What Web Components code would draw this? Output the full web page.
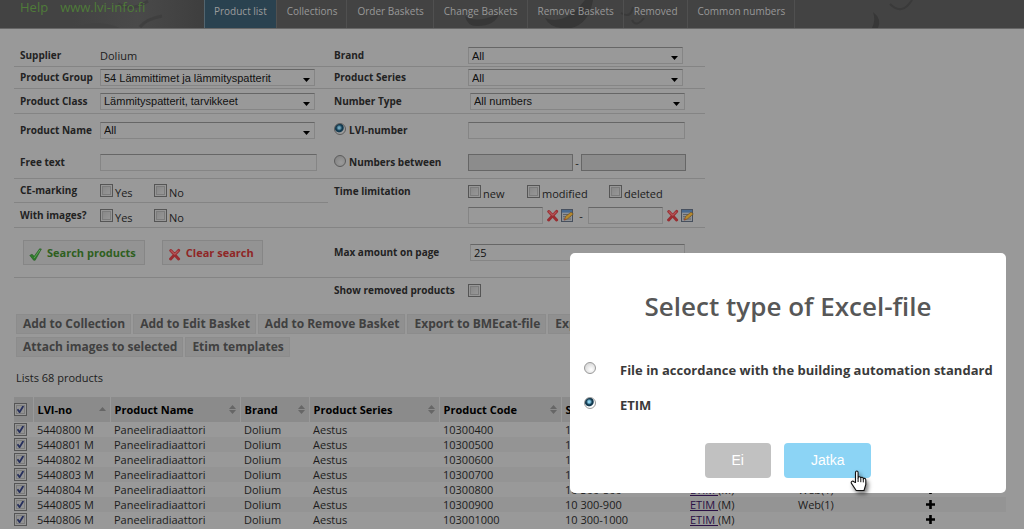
<!DOCTYPE html>
<html lang="en">
<head>
<meta charset="utf-8">
<title>Product list</title>
<style>
  html, body { margin: 0; min-height: 100%; background: #999; }
  body { font: 11px/15px "Open Sans", "Noto Sans", sans-serif; color: #1c1c1c; overflow: hidden; }
</style>
</head>
<body>
<product-page></product-page>

<script>
const define = (name, html) => customElements.define(name, class extends HTMLElement {
  constructor() {
    super();
    this.attachShadow({ mode: "open" }).innerHTML = html;
  }
});

/* Tick boxes and radios shared by the form, the table and the dialog */
const tickStyles = `
  input[type=checkbox], input[type=radio] { appearance: none; box-sizing: border-box; margin: 0; flex: none; }
  input[type=checkbox] {
    width: 13px; height: 13px; border: 1px solid #555;
    background: linear-gradient(135deg, #848484, #9a9a9a); box-shadow: inset 0 0 0 1px #969696, inset 0 0 0 2px #7c7c7c;
  }
  input[type=checkbox]:checked {
    background: url("data:image/svg+xml,%3Csvg xmlns='http://www.w3.org/2000/svg' viewBox='0 0 11 11'%3E%3Cpath d='M2.5 5.2 4.6 8.2 8.3 2' fill='none' stroke='%23262f5c' stroke-width='1.8'/%3E%3C/svg%3E") center / 11px no-repeat, #929292;
  }
  input[type=radio] {
    width: 12px; height: 12px; border: 1px solid var(--ring, #5c5c5c); border-radius: 50%;
    background: radial-gradient(circle at 60% 65%, var(--face, #9b9b9b), var(--shade, #7f7f7f));
  }
  input[type=radio]:checked {
    background: radial-gradient(circle at 42% 38%, var(--spark, #6da3ba) 0 1px, #12394f 3px 4px, var(--face, #9b9b9b) 5px);
  }`;

const cross = `<svg width="13" height="13" viewBox="0 0 13 13" aria-hidden="true"><path d="M2.8 2.6 10.6 11M10.6 2.4 2.6 11" stroke="#992d31" stroke-width="3" stroke-linecap="round"/><path d="M3 2.7 6.4 6M10.2 2.9 7 6" stroke="#b35558" stroke-width="1.2" stroke-linecap="round"/></svg>`;
const tick = `<svg width="13" height="13" viewBox="0 0 13 13" aria-hidden="true"><path d="M.8 7.4 3 6.2 5.2 8.3 10.6.8 12.4 1 6.2 12.2H4.6Z" fill="#2f7a2c" stroke="#245c22" stroke-width=".6"/><path d="M5.2 10 11 1.8" stroke="#5da058" stroke-width="1"/></svg>`;
const calendar = `<svg width="13" height="13" viewBox="0 0 13 13" aria-hidden="true"><rect x=".5" y=".5" width="11" height="12" fill="#8f9296" stroke="#47505e"/><path d="M1 1h10v2.6H1z" fill="#48698f"/><path d="M2 5.5h8M2 7.7h8M2 10h8" stroke="#5f6268"/><path d="m3.5 11 1-3.5L10 3.2l2.3 1.7L6.6 9.8Z" fill="#b78a2e" stroke="#6d4e1b" stroke-width=".6"/><path d="m3.2 11.4.5-2 1.4 1.3Z" fill="#b03a2c"/></svg>`;

define("site-header", `
<style>
  :host { display: flex; position: relative; height: 29px; background: #434343; border-bottom: 1px solid #666; box-sizing: border-box; overflow: hidden; }
  .drops { position: absolute; inset: 0; width: 100%; height: 100%; }
  .links { display: flex; flex: 0 0 184px; gap: 12px; padding-left: 20px; font-size: 13px; line-height: 14px; }
  .links a { color: #4f7b39; }
  a { position: relative; text-decoration: none; color: #989898; }
  nav { display: flex; position: relative; font-size: 10px; }
  nav a { padding: 0 9px 0 10px; line-height: 23px; border-right: 1px solid #505050; white-space: nowrap; }
  nav a[aria-current] { background: #2a4250; border-left: 1px solid #53656f; padding-left: 9px; color: #9c9c9c; }
</style>
<svg class="drops" viewBox="0 0 1024 28" preserveAspectRatio="xMinYMin slice" aria-hidden="true">
  <defs><linearGradient id="g" x1="0" x2="1"><stop offset="0" stop-color="#434343"/><stop offset=".5" stop-color="#4c4c4c"/><stop offset="1" stop-color="#3c3c3c"/></linearGradient></defs>
  <path d="M72 0h132v28H120Q98 18 72 28Z" fill="url(#g)" opacity=".7"/>
  <path d="M118 4q14 8 30-3M140 27q6-8 22-11" stroke="#3a3a3a" stroke-width="3" fill="none" opacity=".6"/>
  <path d="M465 16q10 8 34-2-4 12-22 12-10 0-12-10ZM545 18q20 8 40-18h8q-4 24-22 28-20 2-26-10Z" fill="#373737"/>
  <path d="M621 13q10 6 12-6M632 20q4 8 12-2M890 4q12 12 22-4" fill="none" stroke="#3a3a3a" stroke-width="2"/>
  <path d="M873 12q9 7 5 16h-6q4-8 1-16Z" fill="#373737"/>
</svg>
<div class="links"><a href="#help">Help</a><a href="#info">www.lvi-info.fi</a></div>
<nav>
  <a href="#list" aria-current="page">Product list</a><a href="#collections">Collections</a><a href="#order">Order Baskets</a><a href="#change">Change Baskets</a><a href="#remove">Remove Baskets</a><a href="#removed">Removed</a><a href="#common">Common numbers</a>
</nav>`);

/* One ruled band of the search form: left half, right half */
define("form-band", `
<style>
  :host { display: grid; grid-template-columns: 314px 1fr; border-bottom: 1px solid #848484; }
  :host([plain]) { border-bottom: 0; }
</style><slot></slot>`);

/* A caption with the controls that belong to it */
define("form-field", `
<style>
  :host { display: flex; align-items: center; box-sizing: border-box; padding-left: 6px; }
  .caption { flex: 0 0 80px; display: flex; font-size: 10px; font-weight: 700; color: #222; white-space: nowrap; }
  :host([wide]) .caption { flex-basis: 134px; }
  .controls { display: flex; align-items: center; }
</style>
<div class="caption"><slot name="caption"></slot></div><div class="controls"><slot></slot></div>`);

const select = (id, text) => `<select id="${id}"><option>${text}</option></select>`;
const check = (id, text) => `<span class="check"><input type="checkbox" id="${id}"><label for="${id}">${text}</label></span>`;

define("search-form", `
<style>
  ${tickStyles}
  :host { display: block; max-width: 691px; padding: 16px 0 0 14px; }
  select, input[type=text] {
    appearance: none; box-sizing: border-box; height: 17px; width: 215px; margin: 0; padding: 0 3px;
    border: 1px solid #858585; border-top-color: #666; border-radius: 0; background: #999; color: #111;
    font: 11px/13px "Liberation Sans", Arial, sans-serif;
  }
  select { display: block; padding-top: 1px; background: url("data:image/svg+xml,%3Csvg xmlns='http://www.w3.org/2000/svg' width='7' height='4'%3E%3Cpath d='M0 0h7L3.5 4Z'/%3E%3C/svg%3E") right 4px top 8px no-repeat; }
  input[type=text] { width: 217px; font-family: "Open Sans", sans-serif; }
  input:disabled { background: #8c8c8c; border-color: #666; }
  input.half { width: 105px; }
  input.date { width: 75px; }
  input#max { width: 215px; }
  .dash { width: 8px; text-align: center; }
  .inset { margin-left: 2px; }
  .stack { display: grid; }
  .check { display: flex; align-items: center; gap: 2px; }
  .check label { padding-top: 4px; line-height: 13px; }
  .yesno { display: grid; grid-template-columns: 54px 54px; }
  .times { display: grid; grid-template-columns: 59px 82px 80px; }
  .radio { display: flex; gap: 3px; }
  .dates { display: flex; align-items: center; gap: 3px; }
  .dates button { display: block; margin: 0; padding: 0; border: 0; background: none; height: 13px; width: 13px; }
  .dates button + button { margin-left: -1px; }
  .buttons { display: flex; align-items: center; gap: 17px; padding-left: 9px; }
  .buttons button {
    display: flex; align-items: center; gap: 5px; height: 25px; padding: 0 8px 0 5px; white-space: nowrap;
    border: 1px solid #868686; background: #939393; font: 700 11px/15px "Open Sans", sans-serif;
  }
  .buttons svg { margin-top: 3px; }
  .go { color: #2e5f1e; } .clear { color: #8f2626; }
  .h22 { height: 21px; } .h25 { height: 24px; } .h32 { height: 32px; } .h48 { height: 49px; }
  .rule { border-bottom: 1px solid #848484; }
</style>
<form>
  <form-band>
    <form-field class="h22"><span slot="caption">Supplier</span>Dolium</form-field>
    <form-field class="h22" wide><label slot="caption" for="brand">Brand</label>${select("brand", "All")}</form-field>
  </form-band>
  <form-band>
    <form-field class="h22"><label slot="caption" for="group">Product Group</label>${select("group", "54 Lämmittimet ja lämmityspatterit")}</form-field>
    <form-field class="h22" wide><label slot="caption" for="series">Product Series</label>${select("series", "All")}</form-field>
  </form-band>
  <form-band>
    <form-field class="h25"><label slot="caption" for="class">Product Class</label>${select("class", "Lämmityspatterit, tarvikkeet")}</form-field>
    <form-field class="h25" wide><label slot="caption" for="type">Number Type</label><span class="inset">${select("type", "All numbers")}</span></form-field>
  </form-band>
  <form-band>
    <div class="stack">
      <form-field class="h32"><label slot="caption" for="name">Product Name</label>${select("name", "All")}</form-field>
      <form-field class="h32"><label slot="caption" for="free">Free text</label><input type="text" id="free"></form-field>
    </div>
    <div class="stack">
      <form-field class="h32" wide><span slot="caption" class="radio"><input type="radio" name="by" id="lvi" checked><label for="lvi">LVI-number</label></span><input type="text" aria-label="LVI-number"></form-field>
      <form-field class="h32" wide><span slot="caption" class="radio"><input type="radio" name="by" id="between"><label for="between">Numbers between</label></span><input type="text" class="half" disabled aria-label="From number"><span class="dash">-</span><input type="text" class="half" disabled aria-label="To number"></form-field>
    </div>
  </form-band>
  <form-band>
    <div class="stack">
      <form-field class="h25 rule"><span slot="caption">CE-marking</span><div class="yesno">${check("ce-y", "Yes")}${check("ce-n", "No")}</div></form-field>
      <form-field class="h25"><span slot="caption">With images?</span><div class="yesno">${check("im-y", "Yes")}${check("im-n", "No")}</div></form-field>
    </div>
    <div class="stack">
      <form-field class="h25" wide><span slot="caption">Time limitation</span><div class="times">${check("t-new", "new")}${check("t-mod", "modified")}${check("t-del", "deleted")}</div></form-field>
      <form-field class="h25" wide><div class="dates"><input type="text" class="date" aria-label="From date"><button type="button" aria-label="Clear from date">${cross}</button><button type="button" aria-label="Pick from date">${calendar}</button><span class="dash">-</span><input type="text" class="date" aria-label="To date"><button type="button" aria-label="Clear to date">${cross}</button><button type="button" aria-label="Pick to date">${calendar}</button></div></form-field>
    </div>
  </form-band>
  <form-band>
    <div class="buttons"><button type="button" class="go">${tick}Search products</button><button type="button" class="clear">${cross}Clear search</button></div>
    <form-field class="h48" wide><label slot="caption" for="max">Max amount on page</label><span class="inset"><input type="text" id="max" value="25"></span></form-field>
  </form-band>
  <form-band plain>
    <span></span>
    <form-field class="h25" wide><label slot="caption" for="removed">Show removed products</label><input type="checkbox" id="removed"></form-field>
  </form-band>
</form>`);

define("action-bar", `
<style>
  :host { display: flex; flex-wrap: wrap; gap: 3px 2px; max-width: 680px; padding: 12px 16px 0; }
  button {
    margin: 0; height: 20px; padding: 0 5px 0 6px; border: 1px solid #8c8c8c; background: #909090; color: #404040;
    font: 700 12px/18px "Open Sans", sans-serif; white-space: nowrap;
  }
</style>
<button>Add to Collection</button><button>Add to Edit Basket</button><button>Add to Remove Basket</button><button>Export to BMEcat-file</button><button>Export to Excel</button><button>Attach images to selected</button><button>Etim templates</button>`);

const codes = [["5440800", "10300400", "10 300-400"], ["5440801", "10300500", "10 300-500"], ["5440802", "10300600", "10 300-600"], ["5440803", "10300700", "10 300-700"], ["5440804", "10300800", "10 300-800"], ["5440805", "10300900", "10 300-900"], ["5440806", "103001000", "10 300-1000"]];
const sortMark = up => `<svg width="7" height="9" viewBox="0 0 7 9" aria-hidden="true"><path d="M0 4 3.5 0 7 4Z${up ? "" : "M0 5h7L3.5 9Z"}" transform="translate(0 ${up ? 2 : 0})" fill="#666"/></svg>`;
const head = (text, up) => `<th scope="col"><div>${text}${sortMark(up)}</div></th>`;

define("product-table", `
<style>
  ${tickStyles}
  :host { display: block; padding: 0 18px 0 14px; }
  p { margin: 0; padding: 13px 2px 12px; }
  table { width: 100%; table-layout: fixed; border-collapse: collapse; }
  th { height: 25px; padding: 0 4px; background: #8b8b8b; border-right: 1px solid #999; text-align: left; font-size: 11px; line-height: 15px; font-weight: 700; color: #000; box-sizing: border-box; white-space: nowrap; }
  th div { display: flex; align-items: center; justify-content: space-between; }
  td { height: 15px; padding: 0 4px; line-height: 15px; white-space: nowrap; }
  tbody tr:nth-child(even) { background: #949494; }
  th:first-child, td:first-child { padding: 0; }
  input { display: block; }
  a { color: #2b1145; }
  td svg { display: block; }
</style>
<p>Lists 68 products</p>
<table>
  <colgroup><col width="19"><col width="77"><col width="130"><col width="69"><col width="130"><col width="122"><col width="125"><col width="108"><col width="128"><col></colgroup>
  <thead><tr><th><input type="checkbox" checked aria-label="Select all"></th>${head("LVI-no", true)}${head("Product Name")}${head("Brand")}${head("Product Series")}${head("Product Code")}${head("Supplier Code")}${head("ETIM")}${head("Images")}<th></th></tr></thead>
  <tbody>${codes.map(([no, code, supplier], i) => `<tr><td><input type="checkbox" checked aria-label="Select ${no}"></td><td>${no} M</td><td>Paneeliradiaattori</td><td>Dolium</td><td>Aestus</td><td>${code}</td><td>${supplier}</td><td><a href="#etim">ETIM </a>(M)</td><td>${i < 6 ? "Web(1)" : ""}</td><td><svg width="9" height="9" viewBox="0 0 9 9" aria-hidden="true"><path d="M4.5 0v9M0 4.5h9" stroke="#000" stroke-width="2.6"/></svg></td></tr>`).join("")}</tbody>
</table>`);

define("excel-dialog", `
<style>
  ${tickStyles}
  :host {
    display: block; position: absolute; top: 253px; right: 18px; width: 436px; height: 240px; box-sizing: border-box; padding: 34px 14px 0;
    border-radius: 5px; background: #fff; --ring: #999; --face: #fff; --shade: #ccc; --spark: #8fd4f0;
  }
  h2 { margin: 0; text-align: center; font-size: 26px; line-height: 38px; font-weight: 600; color: #575757; }
  .options { display: grid; row-gap: 15px; padding-top: 34px; }
  .option { display: grid; grid-template-columns: 36px 1fr; line-height: 20px; font-size: 13px; font-weight: 700; color: #3a3a3a; white-space: nowrap; }
  .option label { padding-top: 2px; line-height: 18px; }
  .option input { margin-top: 3px; }
  .buttons { display: flex; justify-content: center; gap: 13px; padding-top: 29px; }
  button { height: 35px; padding: 0 27px; border: 0; border-radius: 4px; color: #fff; background: #c1c1c1; font: 14px/35px "Liberation Sans", Arial, sans-serif; }
  .ok { background: #8cd4f5; }
  .hand { position: absolute; left: 280px; top: 217px; filter: drop-shadow(2px 3px 2px #0008); }
</style>
<h2>Select type of Excel-file</h2>
<div class="options">
  <div class="option"><input type="radio" name="kind" id="bas"><label for="bas">File in accordance with the building automation standard</label></div>
  <div class="option"><input type="radio" name="kind" id="etim" checked><label for="etim">ETIM</label></div>
</div>
<div class="buttons"><button>Ei</button><button class="ok">Jatka</button></div>
<svg class="hand" width="18" height="22" viewBox="0 0 18 22" aria-hidden="true"><path d="M5.5 12.5V2.6Q5.5 1 6.8 1T8.1 2.6V8Q8.3 6.7 9.5 6.8T10.8 8.2Q11 7.2 12.1 7.3T13.3 8.9Q13.7 8.1 14.7 8.4T15.8 10V14.5L14 20.5H6.2L1.6 13.6Q.7 12.2 1.8 11.4T4.2 12Z" fill="#fff" stroke="#111" stroke-width="1.1" stroke-linejoin="round"/><path d="M8.1 8v4M10.8 8.6v3.6M13.3 9v3.4" stroke="#111"/></svg>`);

define("product-page", `
<style>:host { display: block; position: relative; }</style>
<site-header></site-header>
<main><search-form></search-form><action-bar></action-bar><product-table></product-table></main>
<excel-dialog role="dialog" aria-label="Select type of Excel-file"></excel-dialog>`);
</script>
</body>
</html>
